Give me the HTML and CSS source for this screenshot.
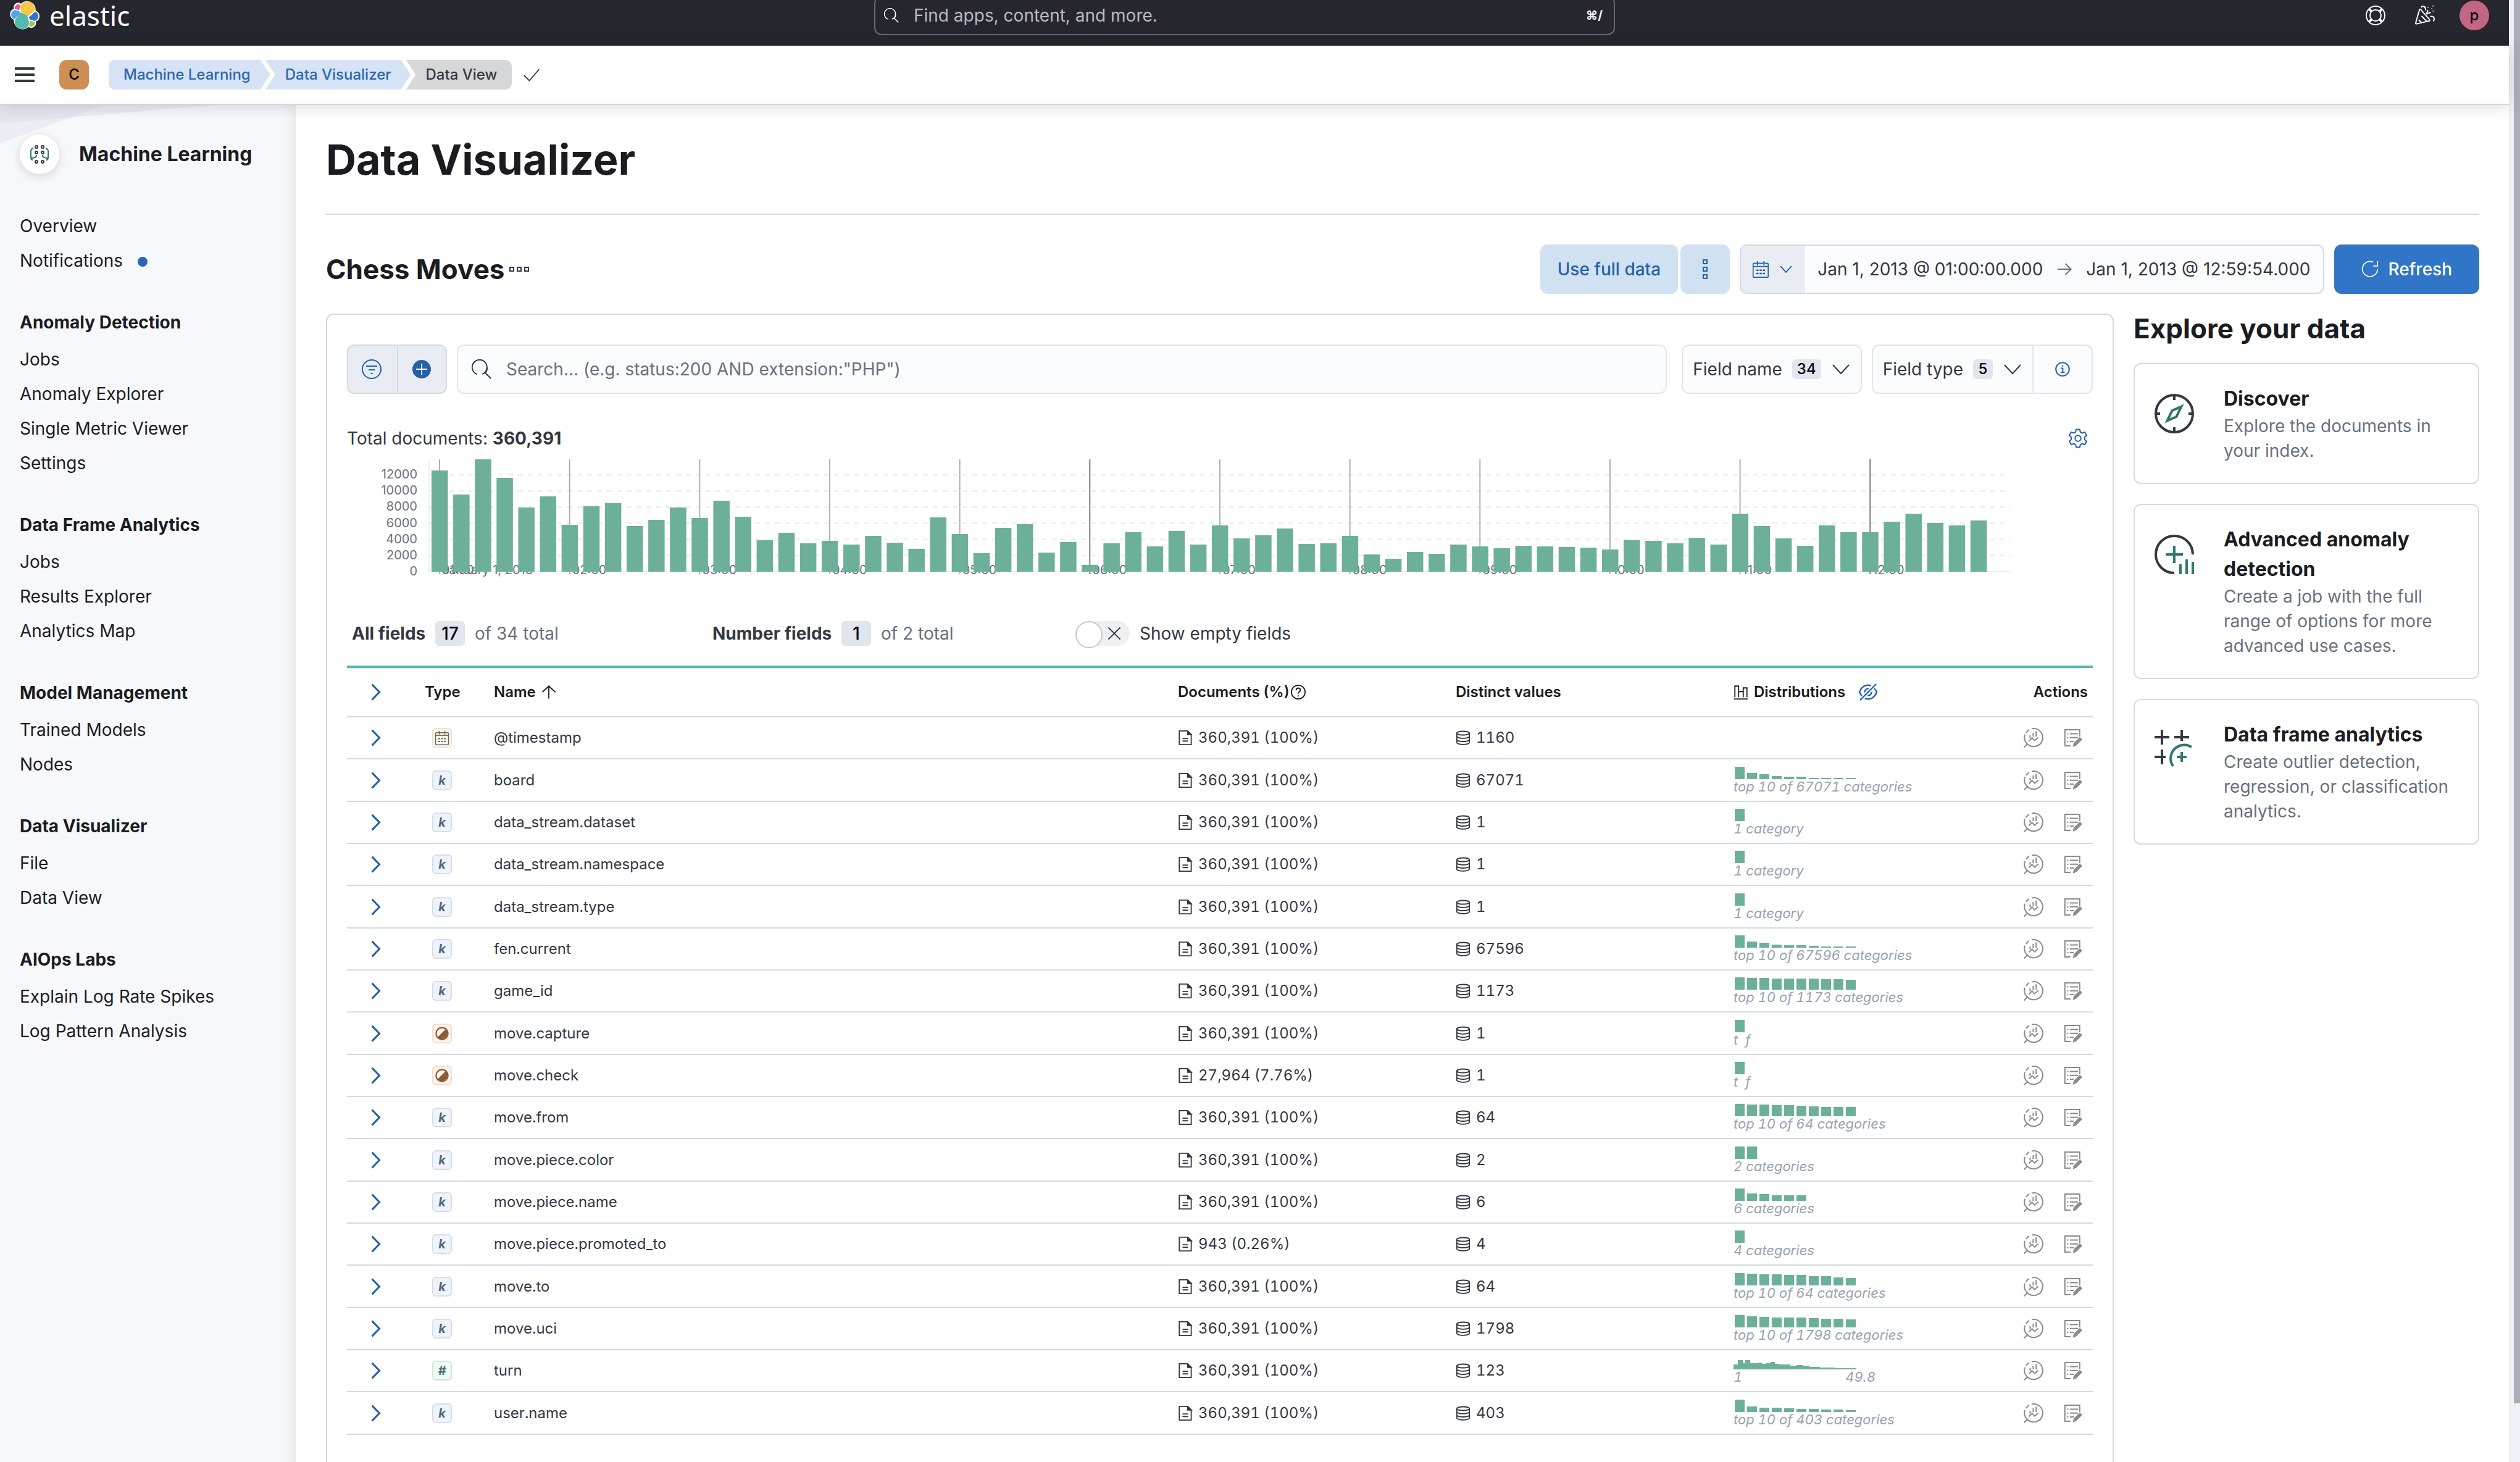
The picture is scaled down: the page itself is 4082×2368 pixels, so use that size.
FILE: index.html
```html
<!DOCTYPE html>
<html lang="en">

<head>
    <meta charset="UTF-8">
    <meta name="viewport" content="width=device-width, initial-scale=1.0">
    <title>Data Visualizer - Elastic</title>
    <link rel="stylesheet" href="styles.css">
</head>

<body>
    <!-- icon sprite -->
    <svg class="sprite" aria-hidden="true">
        <symbol id="i-search" viewBox="0 0 16 16"><path d="M8.6 12A6 6 0 1 0 4.5 12.1M11 11l4.5 4.5" /><path d="M11 11A6 6 0 0 0 12.5 6.5" /></symbol>
        <symbol id="i-check" viewBox="0 0 16 16"><path d="M1 8.500l5 5 9-10.500" /></symbol>
        <symbol id="i-down" viewBox="0 0 16 16"><path d="M1.500 4.500l6.500 7 6.500-7" /></symbol>
        <symbol id="i-right" viewBox="0 0 16 16"><path d="M4.800 1.800l6 6.200-6 6.200" /></symbol>
        <symbol id="i-calendar" viewBox="0 0 16 16"><path d="M2 2.500h12a1 1 0 0 1 1 1v11a1 1 0 0 1-1 1H2a1 1 0 0 1-1-1v-11a1 1 0 0 1 1-1zM1 5.500h14M5 .500v4M11 .500v4" /><path d="M4 9h8M4 12h8" stroke-width="1.400" stroke-dasharray="2 1" /></symbol>
        <symbol id="i-doc" viewBox="0 0 16 16"><path d="M1.500.600h9l3.900 3.900v10.900H1.500z" /><path d="M10.500.600v4h4z" fill="currentColor" /><path d="M5 8.800h6M5 11.500h6" /></symbol>
        <symbol id="i-db" viewBox="0 0 16 16"><ellipse cx="8" cy="3" rx="6.800" ry="2" /><path d="M1.200 3v10c0 1.200 3 2.200 6.800 2.200s6.800-1 6.800-2.200V3M1.200 6.400c0 1.200 3 2.200 6.800 2.200s6.800-1 6.800-2.200M1.200 9.800c0 1.200 3 2.200 6.800 2.200s6.800-1 6.800-2.200" /></symbol>
        <symbol id="i-bool" viewBox="0 0 16 16"><circle cx="8" cy="8" r="6.400" stroke-width="1.400" /><path d="M12.500 3.500A6.500 6.500 0 0 1 3.500 12.500z" fill="currentColor" /></symbol>
        <symbol id="i-lens" viewBox="0 0 16 16"><path d="M6.500.700A7.300 7.300 0 1 1 3 13M3 13A7.300 7.300 0 0 1 1 5.400M1.900 3.900L4.300 1.400M.200 15.800L3 13M5.200 6v2.300M7.700 4v3M10.100 2.600V7M4.300 10.600l2.500-2.500 2 2.200 3.100-2.600" /></symbol>
        <symbol id="i-edit" viewBox="0 0 16 16"><path d="M6 14.500H1.400V1.500h12v5.500M3.200 4.800h1M5.500 4.800H12M3.200 7.900h1M5.500 7.900H12M3.200 11h1M5.500 11H8.500" /><path d="M7.800 15.400l.700-3 5-5 2 2-5 5z" fill="currentColor" stroke="none" /></symbol>
    </svg>

    <div class="app">
        <header class="topbar">
            <a class="brand" href="#">
                <svg class="brand-mark" viewBox="0 0 32 32" aria-hidden="true">
                    <path fill="#fff" d="M32 16.800c0-2.700-1.700-5-4.200-5.900A9.300 9.300 0 0 0 12 3.300 4.900 4.900 0 0 0 4.400 8.800 6.300 6.300 0 0 0 .200 14.700c0 2.700 1.700 5.100 4.200 6a9.300 9.300 0 0 0 15.800 7.600 4.900 4.900 0 0 0 7.600-5.600 6.300 6.300 0 0 0 4.200-5.900z" />
                    <path fill="#f4c744" fill-rule="evenodd" d="M12.600 13.800l7 3.200 7.100-6.200A7.900 7.900 0 1 0 11.300 7z" />
                    <path fill="#54bab0" d="M5.500 20.900a7.900 7.900 0 1 0 15.400 3.900l-1.200-6.100-1.500-2.900-7-3.200z" />
                    <path fill="#e0619a" d="M5.400 9.100l4.800 1.100 1-5.400a3.800 3.800 0 0 0-5.800 4.300z" />
                    <path fill="#51a4ea" d="M5 10.200c-2.100.700-3.600 2.800-3.600 5 0 2.100 1.300 4 3.300 4.800l6.700-6-1.200-2.700z" />
                    <path fill="#9cc443" d="M20.900 27.300a3.800 3.800 0 0 0 5.800-4.300l-4.800-1.100z" />
                    <path fill="#3175c8" d="M21.800 20.600l5.300 1.200c2.100-.700 3.600-2.800 3.600-5 0-2.100-1.300-4-3.300-4.800l-6.900 6z" />
                </svg>
                <span class="brand-name">elastic</span>
            </a>
            <label class="global-search">
                <svg class="icon-m"><use href="#i-search" /></svg>
                <input type="search" placeholder="Find apps, content, and more." aria-label="Find apps, content, and more">
                <kbd>⌘/</kbd>
            </label>
            <div class="topbar-right">
                <button class="icon-btn" aria-label="Help">
                    <svg class="icon-l" viewBox="0 0 16 16"><circle cx="8" cy="8" r="7.500" /><circle cx="8" cy="8" r="4.500" /><path d="M2.900 2.900l2 2M13.100 2.900l-2 2M2.900 13.100l2-2M13.100 13.100l-2-2" stroke-width="2" /></svg>
                </button>
                <button class="icon-btn" aria-label="What's new">
                    <svg class="icon-l" viewBox="0 0 16 16"><path d="M3.500 3.500c.200-.700.700-.700 1.200-.200l7 8c.500.500.200 1-.500 1.200L1.300 14.800c-.700.100-.900-.200-.700-.900zM2.900 11.500l2 2M5.300 8.500l4 4.200M4.800 1.500c1.200-1.500 4-1.300 3.700 2.300M12.300 8.900c2.800-.600 4.200 1.500 2.400 3.800M9.200 6.900l3.500-1.400M9.200 6.900l1.200-3.400" /><path d="M10.200 1.500h.8M14.200.500h.8M13.200 2.500h.8M14.200 4.500h.8" opacity=".7" /></svg>
                </button>
                <button class="user-avatar" aria-label="Account">p</button>
            </div>
        </header>

        <nav class="crumb-bar" aria-label="Breadcrumbs">
            <button class="menu-btn" aria-label="Toggle menu"><span></span><span></span><span></span></button>
            <button class="space-avatar">C</button>
            <ol class="crumbs">
                <li><a href="#">Machine Learning</a></li>
                <li><a href="#">Data Visualizer</a></li>
                <li class="current">Data View</li>
            </ol>
            <svg class="icon-c"><use href="#i-check" /></svg>
        </nav>

        <div class="body-row">
            <nav class="sidebar" aria-label="Machine Learning">
                <div class="sidebar-title">
                    <span class="solution-icon">
                        <svg class="icon-l" viewBox="0 0 32 32"><g stroke="#343741" stroke-width="2"><circle cx="11" cy="4" r="2" /><circle cx="21" cy="4" r="2" /><circle cx="11" cy="13" r="2" /><circle cx="21" cy="13" r="2" /><circle cx="11" cy="28" r="2" /><circle cx="21" cy="28" r="2" /></g><path stroke="#2f776f" stroke-width="2" d="M6 6C3 7 2 9 2 11v10c0 2 1 4 3 4M26 6c3 1 4 3 4 5v10c0 2-1 4-3 4M3 22c4 0 8-1 8-5M29 22c-4 0-8-1-8-5" /></svg>
                    </span>
                    <h2>Machine Learning</h2>
                </div>
                <ul>
                    <li><a href="#">Overview</a></li>
                    <li><a href="#">Notifications <span class="dot"></span></a></li>
                </ul>
                <h3>Anomaly Detection</h3>
                <ul>
                    <li><a href="#">Jobs</a></li>
                    <li><a href="#">Anomaly Explorer</a></li>
                    <li><a href="#">Single Metric Viewer</a></li>
                    <li><a href="#">Settings</a></li>
                </ul>
                <h3>Data Frame Analytics</h3>
                <ul>
                    <li><a href="#">Jobs</a></li>
                    <li><a href="#">Results Explorer</a></li>
                    <li><a href="#">Analytics Map</a></li>
                </ul>
                <h3>Model Management</h3>
                <ul>
                    <li><a href="#">Trained Models</a></li>
                    <li><a href="#">Nodes</a></li>
                </ul>
                <h3>Data Visualizer</h3>
                <ul>
                    <li><a href="#">File</a></li>
                    <li><a href="#">Data View</a></li>
                </ul>
                <h3>AIOps Labs</h3>
                <ul>
                    <li><a href="#">Explain Log Rate Spikes</a></li>
                    <li><a href="#">Log Pattern Analysis</a></li>
                </ul>
            </nav>

            <main>
                <h1>Data Visualizer</h1>

                <div class="page-bar">
                    <h2>Chess Moves</h2>
                    <button class="boxes boxes-h" aria-label="Data view options"><span></span><span></span><span></span></button>
                    <div class="page-actions">
                        <div class="full-data">
                            <button class="btn-light">Use full data</button>
                            <button class="btn-light btn-more" aria-label="More"><span class="boxes"><span></span><span></span><span></span></span></button>
                        </div>
                        <div class="date-picker">
                            <button class="quick" aria-label="Quick select">
                                <svg class="icon-c"><use href="#i-calendar" /></svg>
                                <svg class="icon-s"><use href="#i-down" /></svg>
                            </button>
                            <button class="date">Jan 1, 2013 @ 01:00:00.000</button>
                            <svg class="icon-arrow" viewBox="0 0 16 16"><path d="M1 8h13.500M9 2.500L14.500 8 9 13.500" /></svg>
                            <button class="date">Jan 1, 2013 @ 12:59:54.000</button>
                        </div>
                        <button class="btn-refresh">
                            <svg class="icon-c" viewBox="0 0 16 16"><path d="M11 1.500a7 7 0 1 0 4 6.500M15 .500v4.500h-4" /></svg>
                            Refresh
                        </button>
                    </div>
                </div>

                <div class="columns">
                    <section class="panel">
                        <div class="filters">
                            <div class="filter-btns">
                                <button aria-label="Saved queries"><svg class="icon-l" viewBox="0 0 16 16"><circle cx="8" cy="8" r="7.500" /><path d="M3.500 5.500h9M5.500 8.500h5M7.200 11.500h1.600" /></svg></button>
                                <button aria-label="Add filter"><svg class="icon-l" viewBox="0 0 16 16"><circle cx="8" cy="8" r="7" fill="currentColor" /><path d="M8 3.500v9M3.500 8h9" stroke="#fff" /></svg></button>
                            </div>
                            <label class="query">
                                <svg class="icon-l"><use href="#i-search" /></svg>
                                <input type="text" placeholder="Search… (e.g. status:200 AND extension:&quot;PHP&quot;)" aria-label="Search">
                            </label>
                            <div class="facet">
                                <button>Field name <span class="badge badge-s">34</span><svg class="icon-l"><use href="#i-down" /></svg></button>
                            </div>
                            <div class="facet">
                                <button>Field type <span class="badge badge-s">5</span><svg class="icon-l"><use href="#i-down" /></svg></button>
                                <button class="info" aria-label="Field types info"><svg class="icon-m" viewBox="0 0 16 16"><circle cx="8" cy="8" r="7.200" stroke-width="1.400" /><path d="M6 7h2.200v4.500M5.800 11.500h4.600M7.200 4.500h1.600" stroke-width="1.400" /></svg></button>
                            </div>
                        </div>

                        <div class="total">
                            <p>Total documents: <strong>360,391</strong></p>
                            <button class="icon-btn" aria-label="Chart options"><svg class="icon-l" viewBox="0 0 16 16"><path d="M6.600.700h2.800l.500 2.100 1.500.900 2.100-.700 1.500 2.500L13.500 7v2l1.500 1.500-1.500 2.500-2.100-.700-1.500.900-.5 2.100H6.600l-.5-2.100-1.500-.900-2.100.700L1 10.500 2.500 9V7L1 5.500 2.500 3l2.100.700 1.500-.900z" /><circle cx="8" cy="8" r="2.400" /></svg></button>
                        </div>

                        <svg class="histogram" id="histogram" viewBox="0 0 2828 240" role="img" aria-label="Document count over time"></svg>

                        <div class="counts">
                            <p class="count"><strong>All fields</strong> <span class="badge">17</span> of 34 total</p>
                            <p class="count"><strong>Number fields</strong> <span class="badge">1</span> of 2 total</p>
                            <label class="switch">
                                <span class="switch-body">
                                    <input type="checkbox" role="switch">
                                    <svg viewBox="0 0 16 16"><path d="M1 1l14 14M15 1L1 15" stroke-width="1.400" /></svg>
                                </span>
                                Show empty fields
                            </label>
                        </div>

                        <table>
                            <thead>
                                <tr>
                                    <th class="c-expand"><button class="expand" aria-label="Expand all"><svg class="icon-l"><use href="#i-right" /></svg></button></th>
                                    <th class="c-type">Type</th>
                                    <th class="c-name"><span class="cell">Name <svg class="icon-m" viewBox="0 0 16 16"><path d="M8 15V1.500M1 8l7-6.500L15 8" /></svg></span></th>
                                    <th class="c-docs"><span class="cell tight">Documents (%) <svg class="icon-m" viewBox="0 0 16 16"><circle cx="8" cy="8" r="7.400" /><path d="M5.700 6c.100-3.200 4.700-3 4.600-.200C10.200 7.600 8 7.600 8 9.700M8 11.500v1.200" stroke-width="1.300" /></svg></span></th>
                                    <th class="c-distinct">Distinct values</th>
                                    <th class="c-dist"><span class="cell"><svg class="icon-m" viewBox="0 0 16 16"><path d="M.500 15.500h15M1.500 13.500V1.500h4v12M5.500 7.500h5v6M10.500 13.500v-10h4v10" /></svg> Distributions <svg class="icon-l eye" viewBox="0 0 16 16"><path d="M14.500 1.500l-13 13M10.500 2.800C6 1.200 2.500 4 1 8c.400 1.200 1.200 2.200 2 3M13 5c.8.800 1.500 1.800 2 3-1.500 4-5 6.800-9.500 5.200M8.500 5.200C6.500 5 5.200 6.300 5.200 8.200M7.500 10.800c2 .2 3.300-1.100 3.300-3" /></svg></span></th>
                                    <th class="c-actions">Actions</th>
                                </tr>
                            </thead>
                            <tbody id="fields"></tbody>
                        </table>
                    </section>

                    <aside class="explore">
                        <h2>Explore your data</h2>
                        <a class="card" href="#">
                            <svg class="card-icon" viewBox="0 0 32 32"><circle cx="16" cy="16" r="15" /><path d="M16 1v4M16 27v4M1 16h3.500M27.500 16H31" /><path class="accent" d="M10.300 21.700l4-8.200 7.400-3.200-4 8.200z" /></svg>
                            <div>
                                <h3>Discover</h3>
                                <p>Explore the documents in your index.</p>
                            </div>
                        </a>
                        <a class="card" href="#">
                            <svg class="card-icon" viewBox="0 0 32 32"><path d="M31 16A15 15 0 1 0 16 31" /><path class="accent" d="M16 9v14M9 16h14M21 24v8M26 20v12M31 22v10" /></svg>
                            <div>
                                <h3>Advanced anomaly detection</h3>
                                <p>Create a job with the full range of options for more advanced use cases.</p>
                            </div>
                        </a>
                        <a class="card" href="#">
                            <svg class="card-icon" viewBox="0 0 32 32"><path d="M6 0v12M0 6h12M22 0v9M16 6h12M6 16v12M0 22h9" /><path class="accent" d="M15 29.500A11 11 0 0 1 30 14M22 18v8M18 22h8" /></svg>
                            <div>
                                <h3>Data frame analytics</h3>
                                <p>Create outlier detection, regression, or classification analytics.</p>
                            </div>
                        </a>
                    </aside>
                </div>
            </main>
        </div>
    </div>
    <div class="scroll-track"><div class="scroll-thumb"></div></div>

    <script src="script.js"></script>
</body>

</html>
```
FILE: styles.css
```css
* {
    box-sizing: border-box;
    margin: 0;
    padding: 0;
}

body {
    display: flex;
    height: 100vh;
    overflow: hidden;
    font-family: Inter, "Liberation Sans", sans-serif;
    font-size: 28px;
    line-height: 40px;
    color: #343741;
    background: #fff;
}

button,
input {
    font: inherit;
    color: inherit;
    background: none;
    border: none;
    outline: none;
}

button {
    cursor: pointer;
}

a {
    color: inherit;
    text-decoration: none;
}

ul,
ol {
    list-style: none;
}

svg {
    display: block;
    flex: none;
    fill: none;
    stroke: currentColor;
}

h1,
h2,
h3 {
    color: #1a1c21;
    font-weight: 700;
}

.sprite {
    position: absolute;
    width: 0;
    height: 0;
}

.icon-s {
    width: 22px;
    height: 22px;
    stroke-width: 1.4;
}

.icon-m {
    width: 24px;
    height: 24px;
}

.icon-c {
    width: 28px;
    height: 28px;
}

.icon-l {
    width: 32px;
    height: 32px;
}

.icon-btn {
    color: inherit;
}

.app {
    flex: 1;
    min-width: 0;
    display: flex;
    flex-direction: column;
}

.scroll-track {
    width: 18px;
    padding-left: 8px;
    background: #f0f1f6;
}

.scroll-thumb {
    height: 96%;
    background: #abaeb9;
}

/* top bar, scrolled slightly out of view */
.topbar {
    display: grid;
    grid-template-columns: 1fr 1200px 1fr;
    align-items: center;
    height: 96px;
    margin-top: -22px;
    padding: 0 48px 0 16px;
    border-bottom: 2px solid #25262e;
    background: #25262e;
    color: #fff;
    flex: none;
}

.brand {
    display: flex;
    align-items: center;
    gap: 16px;
}

.brand-mark {
    width: 48px;
    height: 48px;
    stroke: none;
}

.brand-name {
    font-family: "Noto Sans", "Open Sans", sans-serif;
    font-size: 44px;
    line-height: 48px;
}

.global-search {
    display: flex;
    align-items: center;
    gap: 24px;
    height: 64px;
    padding: 0 18px 0 14px;
    border: 2px solid #6a6b72;
    border-radius: 12px;
}

.global-search input {
    flex: 1;
}

.global-search input::placeholder {
    color: #babbc0;
}

kbd {
    font-family: Inter, "DejaVu Sans", sans-serif;
    font-size: 20px;
    font-weight: 700;
}

.topbar-right {
    display: flex;
    justify-content: flex-end;
    align-items: center;
    gap: 48px;
    margin-right: -16px;
}

.user-avatar {
    width: 48px;
    height: 48px;
    margin-left: -8px;
    border-radius: 50%;
    background: #c36686;
    color: #000;
    font-size: 24px;
    font-weight: 500;
    line-height: 48px;
}

.crumb-bar {
    display: flex;
    align-items: center;
    height: 96px;
    padding: 0 24px;
    border-bottom: 2px solid #cfd4e0;
    box-shadow: 0 2px 24px rgba(0, 0, 0, .16);
    background: #fff;
    position: relative;
    z-index: 2;
    flex: none;
}

.menu-btn {
    display: grid;
    gap: 6px;
    width: 32px;
    margin-right: 40px;
}

.menu-btn span {
    height: 4px;
    background: #343741;
}

.space-avatar {
    width: 48px;
    height: 48px;
    margin-right: 32px;
    border-radius: 12px;
    background: #cd8f54;
    color: #000;
    font-size: 24px;
    font-weight: 500;
}

.crumbs {
    display: flex;
    margin-right: 18px;
    font-size: 24px;
    font-weight: 500;
    line-height: 48px;
}

.crumbs li {
    padding: 0 32px;
    margin-left: -8px;
    background: #d6e3f4;
    color: #2a66b1;
    clip-path: polygon(0 0, calc(100% - 16px) 0, 100% 50%, calc(100% - 16px) 100%, 0 100%, 16px 50%);
}

.crumbs li:first-child {
    margin-left: 0;
    padding-left: 24px;
    border-radius: 10px 0 0 10px;
    clip-path: polygon(0 0, calc(100% - 16px) 0, 100% 50%, calc(100% - 16px) 100%, 0 100%);
}

.crumbs li.current {
    padding-right: 24px;
    border-radius: 0 10px 10px 0;
    background: #d6d7d9;
    color: #343741;
    clip-path: polygon(0 0, 100% 0, 100% 100%, 0 100%, 16px 50%);
}

.body-row {
    display: flex;
    flex: 1;
    min-height: 0;
}

/* sidebar */
.sidebar {
    position: relative;
    width: 480px;
    flex: none;
    padding: 48px 32px;
    background: #f7f8fc;
    box-shadow: inset -24px 0 24px -20px rgba(0, 0, 0, .08);
    color: #1a1c21;
}

.sidebar::before,
.sidebar::after {
    content: "";
    position: absolute;
    top: 0;
    left: 0;
    background: rgba(211, 218, 230, .35);
}

.sidebar::before {
    width: 348px;
    height: 30px;
    clip-path: polygon(0 0, 100% 0, 0 100%);
}

.sidebar::after {
    width: 170px;
    height: 62px;
    clip-path: polygon(0 0, 100% 0, 0 100%);
}

.sidebar-title {
    display: flex;
    align-items: center;
    gap: 32px;
    margin-bottom: 56px;
}

.sidebar-title h2 {
    font-size: 32px;
}

.solution-icon {
    display: grid;
    place-items: center;
    width: 64px;
    height: 64px;
    position: relative;
    z-index: 1;
    border-radius: 50%;
    background: #fff;
    box-shadow: 0 4px 16px rgba(0, 0, 0, .14);
}

.sidebar li {
    line-height: 56px;
}

.sidebar h3 {
    margin-top: 52px;
    margin-bottom: 12px;
    font-size: 28px;
}

.dot {
    display: inline-block;
    width: 16px;
    height: 16px;
    margin-left: 16px;
    border-radius: 50%;
    background: #2a66b8;
}

/* main */
main {
    flex: 1;
    min-width: 0;
    display: flex;
    flex-direction: column;
    padding: 48px 48px 0;
}

h1 {
    padding-bottom: 48px;
    margin-bottom: 48px;
    border-bottom: 2px solid #d3dae6;
    font-size: 68px;
    line-height: 80px;
}

.page-bar {
    display: flex;
    align-items: center;
    margin-bottom: 32px;
}

.page-bar h2,
.explore h2 {
    font-size: 44px;
    line-height: 48px;
}

.boxes {
    display: grid;
    gap: 4px;
    justify-content: center;
}

.boxes span {
    width: 8px;
    height: 8px;
    border: 2px solid currentColor;
}

.boxes-h {
    grid-auto-flow: column;
    margin-left: 8px;
}

.page-actions {
    display: flex;
    gap: 16px;
    margin-left: auto;
}

.full-data {
    display: flex;
    gap: 4px;
}

.btn-light {
    height: 80px;
    padding: 0 28px;
    border-radius: 12px;
    background: #d0e1f2;
    color: #2560a8;
    font-weight: 500;
}

.btn-more {
    width: 80px;
}

.date-picker {
    display: flex;
    align-items: center;
    height: 80px;
    border: 2px solid #d3dae6;
    border-radius: 12px;
    background: #fbfcfd;
    overflow: hidden;
}

.quick {
    display: flex;
    align-items: center;
    gap: 16px;
    height: 100%;
    padding: 0 20px 0 18px;
    background: #e9edf3;
    color: #2560a8;
}

.date {
    padding: 0 20px;
}

.icon-arrow {
    width: 26px;
    height: 26px;
    margin: 0 2px;
    color: #69707d;
    stroke-width: 1.2;
}

.btn-refresh {
    display: flex;
    align-items: center;
    gap: 16px;
    height: 80px;
    padding: 0 44px;
    border-radius: 12px;
    background: #3175c8;
    color: #fff;
    font-weight: 500;
}

.columns {
    display: flex;
    gap: 32px;
    flex: 1;
}

.panel {
    flex: 1;
    min-width: 0;
    padding: 48px 32px 0;
    border: 2px solid #d3dae6;
    border-bottom: none;
    border-radius: 12px 12px 0 0;
}

.filters {
    display: flex;
    gap: 16px;
}

.filter-btns,
.facet,
.query {
    display: flex;
    height: 80px;
    border: 2px solid #e2e5f0;
    border-radius: 12px;
    background: #fbfcfd;
}

.filter-btns {
    border-color: #d3dae6;
    background: #e9edf3;
    color: #2560a8;
}

.filter-btns button {
    width: 79px;
    padding-left: 22px;
}

.filter-btns button + button {
    border-left: 2px solid #d3dae6;
}

.query {
    flex: 1;
    align-items: center;
    gap: 24px;
    padding: 0 22px;
    margin-right: 8px;
}

.query input {
    flex: 1;
}

.query input::placeholder {
    color: #69707d;
}

.facet button {
    display: flex;
    align-items: center;
    padding: 0 16px;
}

.facet .info {
    width: 96px;
    justify-content: center;
    padding: 0;
    border-left: 2px solid #e2e5f0;
    color: #2a66b8;
}

.badge {
    display: inline-block;
    min-width: 48px;
    padding: 0 10px;
    border-radius: 6px;
    background: #e0e5ee;
    color: #000;
    font-size: 28px;
    font-weight: 500;
    text-align: center;
    line-height: 40px;
}

.badge-s {
    min-width: 32px;
    margin: 0 16px;
    padding: 0 8px;
    font-size: 24px;
    line-height: 32px;
}

.total {
    display: flex;
    justify-content: space-between;
    margin-top: 56px;
    padding-right: 8px;
    line-height: 32px;
}

.total .icon-btn {
    color: #2560a8;
}

.histogram {
    width: 100%;
    height: auto;
    margin-bottom: 40px;
}

.histogram text {
    font-size: 20px;
    fill: #69707d;
    stroke: none;
}

.histogram rect {
    fill: #6db099;
    stroke: none;
}

.histogram .grid {
    stroke: #eeeff1;
    stroke-width: 3;
    stroke-dasharray: 8 8;
}

.histogram .axis {
    stroke: #eeeff3;
    stroke-width: 2;
}

.histogram .hour {
    stroke: #b0b0b0;
    stroke-width: 2;
}

.histogram .major {
    stroke: #7c7c7c;
    stroke-width: 2;
}

.counts {
    display: flex;
    align-items: center;
    padding-left: 8px;
    margin-bottom: 32px;
}

.count {
    width: 584px;
    color: #69707d;
}

.count strong {
    color: #343741;
}

.count .badge {
    margin: 0 8px;
}

.switch {
    display: flex;
    align-items: center;
    gap: 16px;
    padding-left: 4px;
}

.switch-body {
    position: relative;
    height: 40px;
}

.switch input {
    display: block;
    width: 88px;
    height: 40px;
    appearance: none;
    border-radius: 20px;
    background: #eff0f3;
}

.switch input::before {
    content: "";
    display: block;
    width: 40px;
    height: 40px;
    border: 2px solid #c5c8cf;
    border-radius: 50%;
    background: #fff;
}

.switch svg {
    position: absolute;
    top: 9px;
    right: 14px;
    width: 22px;
    height: 22px;
}

/* fields table */
table {
    width: 100%;
    table-layout: fixed;
    border-collapse: separate;
    border-spacing: 0;
    border-top: 4px solid #54bab0;
    font-size: 24px;
    line-height: 32px;
}

tbody {
    font-variant-numeric: tabular-nums;
}

th,
td {
    padding: 0 16px;
    border-bottom: 2px solid #d3dae6;
    text-align: left;
    font-weight: 400;
}

th {
    height: 80px;
    color: #1a1c21;
    font-weight: 600;
}

td {
    height: 68px;
}

tr:nth-child(3n + 2) td {
    height: 69px;
}

.c-expand {
    width: 110px;
}

.c-type {
    width: 112px;
}

.c-docs,
.c-distinct {
    width: 450px;
}

.c-dist {
    width: 470px;
}

.c-actions {
    width: 128px;
    padding-right: 8px;
    text-align: right;
    white-space: nowrap;
}

th.c-actions {
    padding-left: 0;
}

.expand {
    display: block;
    margin-left: 15px;
    color: #2560a8;
    stroke-width: 1.5;
}

.cell {
    display: flex;
    align-items: center;
    gap: 9px;
}

.tight {
    gap: 2px;
}

.cell svg {
    stroke-width: 1.2;
}

.cell .eye {
    margin-left: 12px;
    color: #2560a8;
}

.token {
    display: grid;
    place-items: center;
    width: 32px;
    height: 32px;
    margin-left: 12px;
    border: 2px solid #d3dfee;
    border-radius: 6px;
    background: #f0f3f9;
    color: #4a6788;
    font-size: 20px;
    font-weight: 700;
    font-style: italic;
    line-height: 28px;
}

.token svg {
    width: 24px;
    height: 24px;
}

.token.number {
    border-color: #cfe6dc;
    background: #f1f8f5;
    color: #387765;
}

.token.date-type {
    border-color: #e9e3d6;
    background: #f8f5f0;
    color: #756850;
}

.token.boolean {
    border-color: #f3dfcb;
    background: #fbf3ec;
    color: #8c5c35;
}

.mini {
    display: flex;
    align-items: flex-end;
    gap: 4px;
    height: 20px;
    padding-left: 2px;
}

.mini span {
    width: 16px;
    background: #6db099;
}

.mini-area {
    width: 200px;
    height: 20px;
    fill: #6db099;
    stroke: none;
}

.caption {
    display: flex;
    gap: 12px;
    color: #98a2b3;
    font-size: 22px;
    font-style: italic;
    line-height: 24px;
}

.caption.range {
    width: 230px;
    justify-content: space-between;
}

.row-actions {
    display: flex;
    justify-content: flex-end;
    gap: 32px;
    padding-right: 8px;
    color: #8b8b8b;
}

/* right column */
.explore {
    width: 560px;
    flex: none;
}

.explore h2 {
    margin-bottom: 32px;
}

.card {
    display: flex;
    gap: 48px;
    padding: 32px;
    margin-bottom: 32px;
    border: 2px solid #d3dae6;
    border-radius: 12px;
    color: #69707d;
}

.card h3 {
    font-size: 32px;
    line-height: 48px;
}

.card-icon {
    width: 64px;
    height: 64px;
    margin-top: 16px;
    color: #343741;
    stroke-width: 2;
}

.card-icon .accent {
    stroke: #2f776f;
}
```
FILE: script.js
```js
// Histogram: one bar per 10 minutes, bar heights in chart units
var bars = [
    164, 125, 182, 152, 104, 122, 76, 106, 111, 74, 84, 104,
    87, 115, 89, 51, 63, 46, 50, 44, 58, 47, 37, 88,
    61, 30, 71, 77, 31, 48, 11, 46, 64, 41, 66, 44,
    75, 54, 59, 70, 45, 46, 58, 28, 21, 32, 29, 44,
    41, 38, 42, 41, 40, 39, 36, 51, 50, 46, 55, 44,
    94, 74, 54, 42, 75, 64, 64, 81, 94, 79, 75, 83
];

var BASE = 200;
var LEFT = 133;
var RIGHT = 2695;
var FIRST = 150;
var STEP = 35.11;

function line(cls, x1, y1, x2, y2) {
    return '<line class="' + cls + '" x1="' + x1 + '" y1="' + y1 + '" x2="' + x2 + '" y2="' + y2 + '" />';
}

function drawHistogram() {
    var out = line('axis', LEFT, 18, LEFT, BASE) + line('axis', LEFT, BASE, RIGHT, BASE);

    for (var i = 0; i <= 6; i++) {
        var y = BASE - i * 26.15;
        if (i > 0) {
            out += line('grid', LEFT, y, RIGHT, y);
        }
        out += '<text x="114" y="' + (y + 6) + '" text-anchor="end">' + i * 2000 + '</text>';
    }

    for (var h = 1; h <= 12; h++) {
        var x = FIRST + (h - 1) * 6 * STEP;
        out += line(h % 6 === 0 ? 'major' : 'hour', x, 18, x, 204);
        out += '<text x="' + (x + 4) + '" y="204">' + (h < 10 ? '0' : '') + h + ':00</text>';
    }
    out += '<text x="' + (FIRST + 4) + '" y="204">January 1, 2013</text>';

    bars.forEach(function (height, n) {
        out += '<rect x="' + (FIRST + n * STEP - 13) + '" y="' + (BASE - height) + '" width="26.500" height="' + height + '" />';
    });

    document.getElementById('histogram').innerHTML = out;
}

// type, name, documents, distinct values, distribution bars, captions
var fields = [
    ['date', '@timestamp', '360,391 (100%)', '1160', [], []],
    ['keyword', 'board', '360,391 (100%)', '67071', [20, 10, 8, 5, 4, 4, 2, 2, 2, 2], ['top 10 of 67071 categories']],
    ['keyword', 'data_stream.dataset', '360,391 (100%)', '1', [20], ['1 category']],
    ['keyword', 'data_stream.namespace', '360,391 (100%)', '1', [20], ['1 category']],
    ['keyword', 'data_stream.type', '360,391 (100%)', '1', [20], ['1 category']],
    ['keyword', 'fen.current', '360,391 (100%)', '67596', [20, 10, 8, 5, 4, 4, 3, 2, 2, 2], ['top 10 of 67596 categories']],
    ['keyword', 'game_id', '360,391 (100%)', '1173', [20, 19, 19, 18, 18, 18, 18, 17, 17, 16], ['top 10 of 1173 categories']],
    ['boolean', 'move.capture', '360,391 (100%)', '1', [20], ['t', 'f']],
    ['boolean', 'move.check', '27,964 (7.76%)', '1', [20], ['t', 'f']],
    ['keyword', 'move.from', '360,391 (100%)', '64', [20, 19, 19, 18, 18, 17, 16, 15, 15, 15], ['top 10 of 64 categories']],
    ['keyword', 'move.piece.color', '360,391 (100%)', '2', [20, 20], ['2 categories']],
    ['keyword', 'move.piece.name', '360,391 (100%)', '6', [20, 12, 11, 9, 9, 9], ['6 categories']],
    ['keyword', 'move.piece.promoted_to', '943 (0.26%)', '4', [20], ['4 categories']],
    ['keyword', 'move.to', '360,391 (100%)', '64', [20, 19, 18, 18, 17, 17, 15, 15, 13, 12], ['top 10 of 64 categories']],
    ['keyword', 'move.uci', '360,391 (100%)', '1798', [20, 18, 17, 16, 16, 16, 15, 14, 14, 13], ['top 10 of 1798 categories']],
    ['number', 'turn', '360,391 (100%)', '123', 'area', ['1', '49.8']],
    ['keyword', 'user.name', '360,391 (100%)', '403', [20, 9, 7, 7, 6, 5, 5, 4, 4, 3], ['top 10 of 403 categories']]
];

var tokens = {
    keyword: '<span class="token">k</span>',
    number: '<span class="token number">#</span>',
    date: '<span class="token date-type"><svg><use href="#i-calendar" /></svg></span>',
    boolean: '<span class="token boolean"><svg><use href="#i-bool" /></svg></span>'
};

function icon(name, size) {
    return '<svg class="icon-' + size + '"><use href="#i-' + name + '" /></svg>';
}

function distribution(data, captions) {
    if (!captions.length) {
        return '';
    }
    var chart;
    if (data === 'area') {
        chart = '<svg class="mini-area" viewBox="0 0 200 20"><path d="M0 20v-8h7V5h8v5h4V5h8v5h12v-1h7v2h7v-1h7V8h7v3h7v1h18v2h10v-1h10v1h11v2h17v1h25v1h34v2z" /></svg>';
    } else {
        chart = '<div class="mini">' + data.map(function (h) {
            return '<span style="height: ' + h + 'px"></span>';
        }).join('') + '</div>';
    }
    return chart + '<div class="caption' + (data === 'area' ? ' range' : '') + '"><span>' + captions.join('</span><span>') + '</span></div>';
}

function drawFields() {
    document.getElementById('fields').innerHTML = fields.map(function (f) {
        return '<tr>' +
            '<td><button class="expand" aria-label="Expand ' + f[1] + '">' + icon('right', 'l') + '</button></td>' +
            '<td>' + tokens[f[0]] + '</td>' +
            '<td>' + f[1] + '</td>' +
            '<td><span class="cell">' + icon('doc', 'm') + f[2] + '</span></td>' +
            '<td><span class="cell">' + icon('db', 'm') + f[3] + '</span></td>' +
            '<td>' + distribution(f[4], f[5]) + '</td>' +
            '<td class="c-actions"><div class="row-actions">' +
            '<button aria-label="Explore in Lens">' + icon('lens', 'l') + '</button>' +
            '<button aria-label="Edit field">' + icon('edit', 'l') + '</button>' +
            '</div></td>' +
            '</tr>';
    }).join('');
}

drawHistogram();
drawFields();
```
